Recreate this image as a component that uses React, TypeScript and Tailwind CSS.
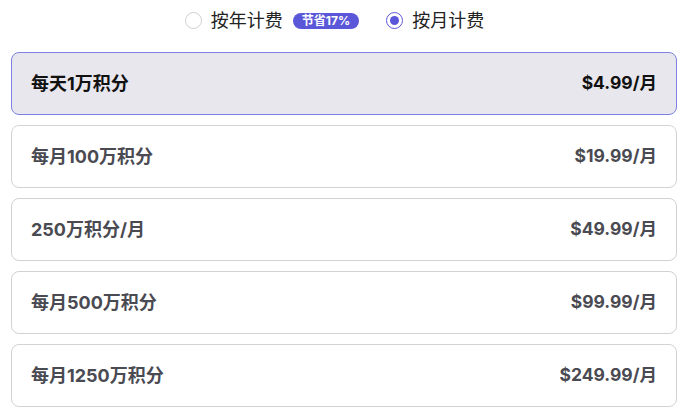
import React, { useState } from 'react';

const plans = [
  { name: '每天1万积分', price: '$4.99/月' },
  { name: '每月100万积分', price: '$19.99/月' },
  { name: '250万积分/月', price: '$49.99/月' },
  { name: '每月500万积分', price: '$99.99/月' },
  { name: '每月1250万积分', price: '$249.99/月' },
];

const Radio: React.FC<{ checked: boolean }> = ({ checked }) => (
  <span
    className={
      checked
        ? 'flex h-[17px] w-[17px] items-center justify-center rounded-full border-[1.5px] border-[#5b57d9] bg-white'
        : 'flex h-[17px] w-[17px] items-center justify-center rounded-full border border-[#cfcfd4] bg-white'
    }
  >
    {checked && <span className="h-[9px] w-[9px] rounded-full bg-[#5b57d9]" />}
  </span>
);

const App: React.FC = () => {
  const [billing, setBilling] = useState<'year' | 'month'>('month');
  const [selected, setSelected] = useState(0);

  return (
    <div
      className="min-h-[412px] w-[690px] bg-white pt-[7px]"
      style={{ fontFamily: '"Segoe UI", Inter, "Noto Sans CJK SC", sans-serif' }}
    >
      {/* Billing toggle */}
      <div className="flex h-[27px] items-center justify-center">
        <div className="ml-[-21px] flex items-center">
          <button className="flex items-center gap-[9px]" onClick={() => setBilling('year')}>
            <Radio checked={billing === 'year'} />
            <span className="text-[18px] text-[#222]">按年计费</span>
          </button>
          <span className="ml-[10px] flex h-[16px] items-center rounded-full bg-[#5b57d9] px-[9px] text-[12px] font-bold leading-none text-white">
            节省17%
          </span>
          <button className="ml-[27px] flex items-center gap-[9px]" onClick={() => setBilling('month')}>
            <Radio checked={billing === 'month'} />
            <span className="text-[18px] text-[#222]">按月计费</span>
          </button>
        </div>
      </div>

      {/* Plans */}
      <div className="mx-[11px] mt-[18px] flex w-[666px] flex-col gap-[10px]">
        {plans.map((p, i) => (
          <button
            key={p.name}
            onClick={() => setSelected(i)}
            className={
              i === selected
                ? 'flex h-[63px] items-center justify-between rounded-lg border border-[#7c7fe3] bg-[#e8e7ed] px-[19px] text-[17.5px] font-bold text-[#111]'
                : 'flex h-[63px] items-center justify-between rounded-lg border border-[#d2d2d6] bg-white px-[19px] text-[17.5px] font-bold text-[#4a4a52]'
            }
          >
            <span className="text-[18px]">{p.name}</span>
            <span>{p.price}</span>
          </button>
        ))}
      </div>
    </div>
  );
};

export default App;
